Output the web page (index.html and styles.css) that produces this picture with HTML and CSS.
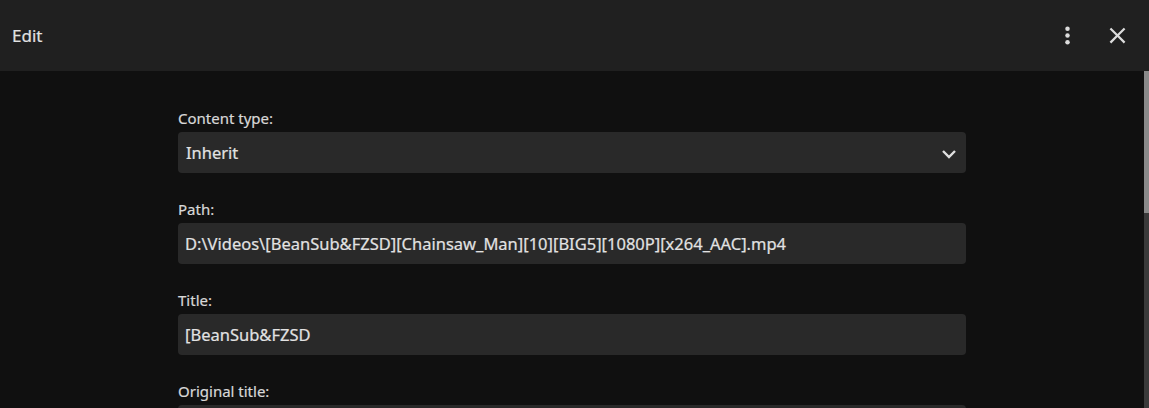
FILE: index.html
```html
<!DOCTYPE html>
<html lang="en">
<head>
<meta charset="utf-8">
<title>Edit</title>
<link rel="stylesheet" href="styles.css">
</head>
<body>
<div class="dialog">
  <header class="dialog-header">
    <h1 class="dialog-title">Edit</h1>
    <div class="header-actions">
      <button class="icon-btn" aria-label="More">
        <svg viewBox="0 0 24 24" width="27" height="27"><circle cx="12" cy="6" r="2"/><circle cx="12" cy="12" r="2"/><circle cx="12" cy="18" r="2"/></svg>
      </button>
      <button class="icon-btn" aria-label="Close">
        <svg viewBox="0 0 24 24" width="27" height="27"><path d="M19 6.41L17.59 5 12 10.59 6.41 5 5 6.41 10.59 12 5 17.59 6.41 19 12 13.41 17.59 19 19 17.59 13.41 12z"/></svg>
      </button>
    </div>
  </header>
  <main class="dialog-content">
    <form class="edit-form">
      <div class="field">
        <label class="field-label">Content type:</label>
        <div class="select">
          <span class="select-value">Inherit</span>
          <svg class="chevron" viewBox="0 0 16 10" width="16" height="10"><polyline points="2,2 8,8 14,2" fill="none" stroke="currentColor" stroke-width="2.4"/></svg>
        </div>
      </div>
      <div class="field">
        <label class="field-label">Path:</label>
        <div class="input">D:\Videos\[BeanSub&amp;FZSD][Chainsaw_Man][10][BIG5][1080P][x264_AAC].mp4</div>
      </div>
      <div class="field">
        <label class="field-label">Title:</label>
        <div class="input">[BeanSub&amp;FZSD</div>
      </div>
      <div class="field">
        <label class="field-label">Original title:</label>
        <div class="input"></div>
      </div>
    </form>
    <div class="scrollbar"><div class="scrollbar-thumb"></div></div>
  </main>
</div>
</body>
</html>
```
FILE: styles.css
```css
html, body {
  margin: 0;
  height: 100%;
  background: #101010;
  font-family: "Noto Sans", "Open Sans", sans-serif;
  color: #e0e0e0;
}

.dialog {
  height: 100vh;
  display: flex;
  flex-direction: column;
}

.dialog-header {
  height: 71px;
  flex: none;
  background: #202020;
  display: flex;
  align-items: center;
  justify-content: space-between;
  padding: 0 12px;
  box-sizing: border-box;
}

.dialog-title {
  margin: 0;
  font-size: 17px;
  font-weight: 400;
  color: #e2e2e2;
  -webkit-text-stroke: 0.2px currentColor;
}

.header-actions {
  display: flex;
  align-items: center;
  gap: 23px;
  padding-right: 6px;
}

.icon-btn {
  background: none;
  border: 0;
  padding: 0;
  width: 27px;
  height: 27px;
  display: flex;
  align-items: center;
  justify-content: center;
  fill: #dcdcdc;
  cursor: pointer;
}

.dialog-content {
  flex: 1;
  position: relative;
  overflow: hidden;
  padding-right: 5px;
}

.scrollbar {
  position: absolute;
  top: 0;
  right: 0;
  bottom: 0;
  width: 5px;
  background: #3a3a3a;
}

.scrollbar-thumb {
  height: 142px;
  background: #8a8a8a;
}

.edit-form {
  width: 788px;
  margin: 0 auto;
  padding-top: 37px;
}

.field {
  margin-bottom: 26px;
}

.field-label {
  display: block;
  font-size: 15px;
  line-height: 20px;
  margin-bottom: 4px;
  color: #d8d8d8;
  -webkit-text-stroke: 0.2px currentColor;
}

.input, .select {
  height: 41px;
  box-sizing: border-box;
  background: #292929;
  border-radius: 4px;
  font-size: 16.5px;
  line-height: 41px;
  padding: 0 7px;
  color: #e2e2e2;
  -webkit-text-stroke: 0.2px currentColor;
  white-space: nowrap;
  overflow: hidden;
}

.select {
  display: flex;
  align-items: center;
  justify-content: space-between;
  padding: 0 9px 0 8px;
}

.chevron {
  color: #e0e0e0;
  margin-top: 3px;
}
```
